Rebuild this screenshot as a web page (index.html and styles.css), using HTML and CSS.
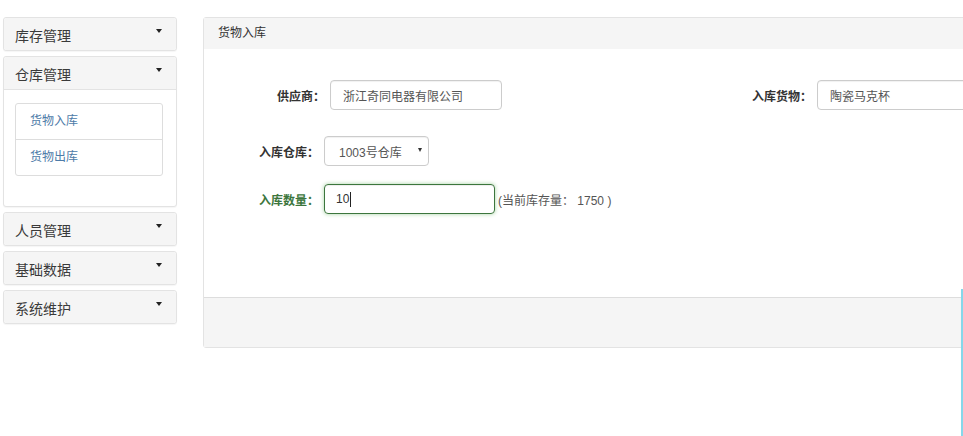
FILE: index.html
```html
<!DOCTYPE html>
<html lang="zh-CN">
<head>
<meta charset="utf-8">
<title>货物入库</title>
<link rel="stylesheet" href="styles.css">
</head>
<body>
<div class="layout">
  <aside class="sidebar">
    <div class="spanel">
      <div class="sp-head"><span>库存管理</span><i class="caret"></i></div>
    </div>
    <div class="spanel">
      <div class="sp-head open"><span>仓库管理</span><i class="caret"></i></div>
      <div class="sp-body">
        <ul class="list">
          <li>货物入库</li>
          <li>货物出库</li>
        </ul>
      </div>
    </div>
    <div class="spanel">
      <div class="sp-head"><span>人员管理</span><i class="caret"></i></div>
    </div>
    <div class="spanel">
      <div class="sp-head"><span>基础数据</span><i class="caret"></i></div>
    </div>
    <div class="spanel">
      <div class="sp-head"><span>系统维护</span><i class="caret"></i></div>
    </div>
  </aside>

  <main class="panel">
    <div class="panel-head">货物入库</div>
    <div class="panel-body">
      <div class="row row-1">
        <div class="group g-supplier">
          <label class="lbl">供应商：</label>
          <div class="input w172">浙江奇同电器有限公司</div>
        </div>
        <div class="group g-goods">
          <label class="lbl">入库货物：</label>
          <div class="input w172">陶瓷马克杯</div>
        </div>
      </div>
      <div class="row row-2">
        <label class="lbl">入库仓库：</label>
        <div class="input select">1003号仓库<i class="caret small"></i></div>
      </div>
      <div class="row row-3">
        <label class="lbl green">入库数量：</label>
        <div class="input w171 focus">10<span class="cursor"></span></div>
        <span class="note">(当前库存量： 1750 )</span>
      </div>
    </div>
    <div class="panel-foot"></div>
  </main>
</div>
<div class="edge-line"></div>
</body>
</html>
```

FILE: styles.css
```css
html, body {
  margin: 0;
  padding: 0;
  background: #fff;
  overflow: hidden;
  width: 963px;
  height: 436px;
}
body {
  font-family: "Liberation Sans", "Noto Sans CJK SC", sans-serif;
  color: #333;
  font-size: 12px;
}
.layout {
  display: flex;
  align-items: flex-start;
  gap: 26px;
  padding: 17px 0 0 3px;
}
.sidebar {
  width: 174px;
  flex: none;
  display: flex;
  flex-direction: column;
  gap: 5px;
}
.spanel {
  border: 1px solid #e3e3e3;
  border-radius: 3px;
  background: #fff;
  box-shadow: 0 1px 1px rgba(0,0,0,0.04);
}
.sp-head {
  height: 32px;
  background: #f5f5f5;
  display: flex;
  align-items: center;
  justify-content: space-between;
  padding: 0 14px 0 11px;
  font-size: 14px;
  color: #3a3a3a;
  border-radius: 3px;
}
.sp-head span { margin-top: 1px; }
.sp-head.open {
  border-bottom: 1px solid #e3e3e3;
  border-radius: 3px 3px 0 0;
}
.caret {
  display: block;
  width: 0;
  height: 0;
  border-left: 3.5px solid transparent;
  border-right: 3.5px solid transparent;
  border-top: 4px solid #222;
  align-self: flex-start;
  margin-top: 11px;
}
.sp-body {
  padding: 13px 13px 30px 11px;
}
.list {
  list-style: none;
  margin: 0;
  padding: 0;
  border: 1px solid #ddd;
  border-radius: 3px;
}
.list li {
  height: 35px;
  line-height: 35px;
  padding-left: 14px;
  color: #4d7ba8;
  font-size: 12px;
}
.list li + li { border-top: 1px solid #ddd; }

.panel {
  width: 800px;
  flex: none;
  border: 1px solid #e3e3e3;
  border-radius: 3px;
  background: #fff;
}
.panel-head {
  height: 31px;
  line-height: 30px;
  padding-left: 14px;
  background: #f5f5f5;
  font-size: 12px;
  color: #333;
}
.panel-body {
  height: 248px;
  padding-top: 31px;
  box-sizing: border-box;
}
.row {
  display: flex;
  align-items: center;
}
.row-1 { padding-left: 73px; }
.row-2 { padding-left: 55px; margin-top: 26px; }
.row-3 { padding-left: 55px; margin-top: 18px; }
.group { display: flex; align-items: center; }
.g-goods { margin-left: 250px; }
.lbl {
  font-weight: bold;
  font-size: 12px;
  color: #333;
  margin-right: 5px;
}
.lbl.green { color: #3c763d; }
.input {
  height: 30px;
  box-sizing: border-box;
  border: 1px solid #ccc;
  border-radius: 4px;
  padding: 0 12px;
  display: flex;
  align-items: center;
  color: #555;
  font-size: 12px;
  box-shadow: inset 0 1px 1px rgba(0,0,0,0.06);
}
.w172 { width: 172px; }
.w171 { width: 171px; }
.select {
  width: 105px;
  padding-left: 14px;
  justify-content: space-between;
  padding-right: 6px;
}
.caret.small {
  border-left-width: 2.5px;
  border-right-width: 2.5px;
  border-top-width: 4px;
  border-top-color: #333;
  margin-top: 11px;
}
.focus {
  border-color: #3c763d;
  box-shadow: inset 0 1px 1px rgba(0,0,0,0.075), 0 0 4px #a6d3a2;
  padding-left: 11px;
  color: #333;
}
.cursor {
  display: inline-block;
  width: 1px;
  height: 15px;
  background: #222;
  margin-left: 1px;
}
.note {
  margin-left: 3px;
  color: #555;
  font-size: 12px;
}
.panel-foot {
  height: 49px;
  background: #f5f5f5;
  border-top: 1px solid #ddd;
}
.edge-line {
  position: absolute;
  left: 961px;
  top: 289px;
  width: 2px;
  height: 147px;
  background: #86d7ea;
}
```
